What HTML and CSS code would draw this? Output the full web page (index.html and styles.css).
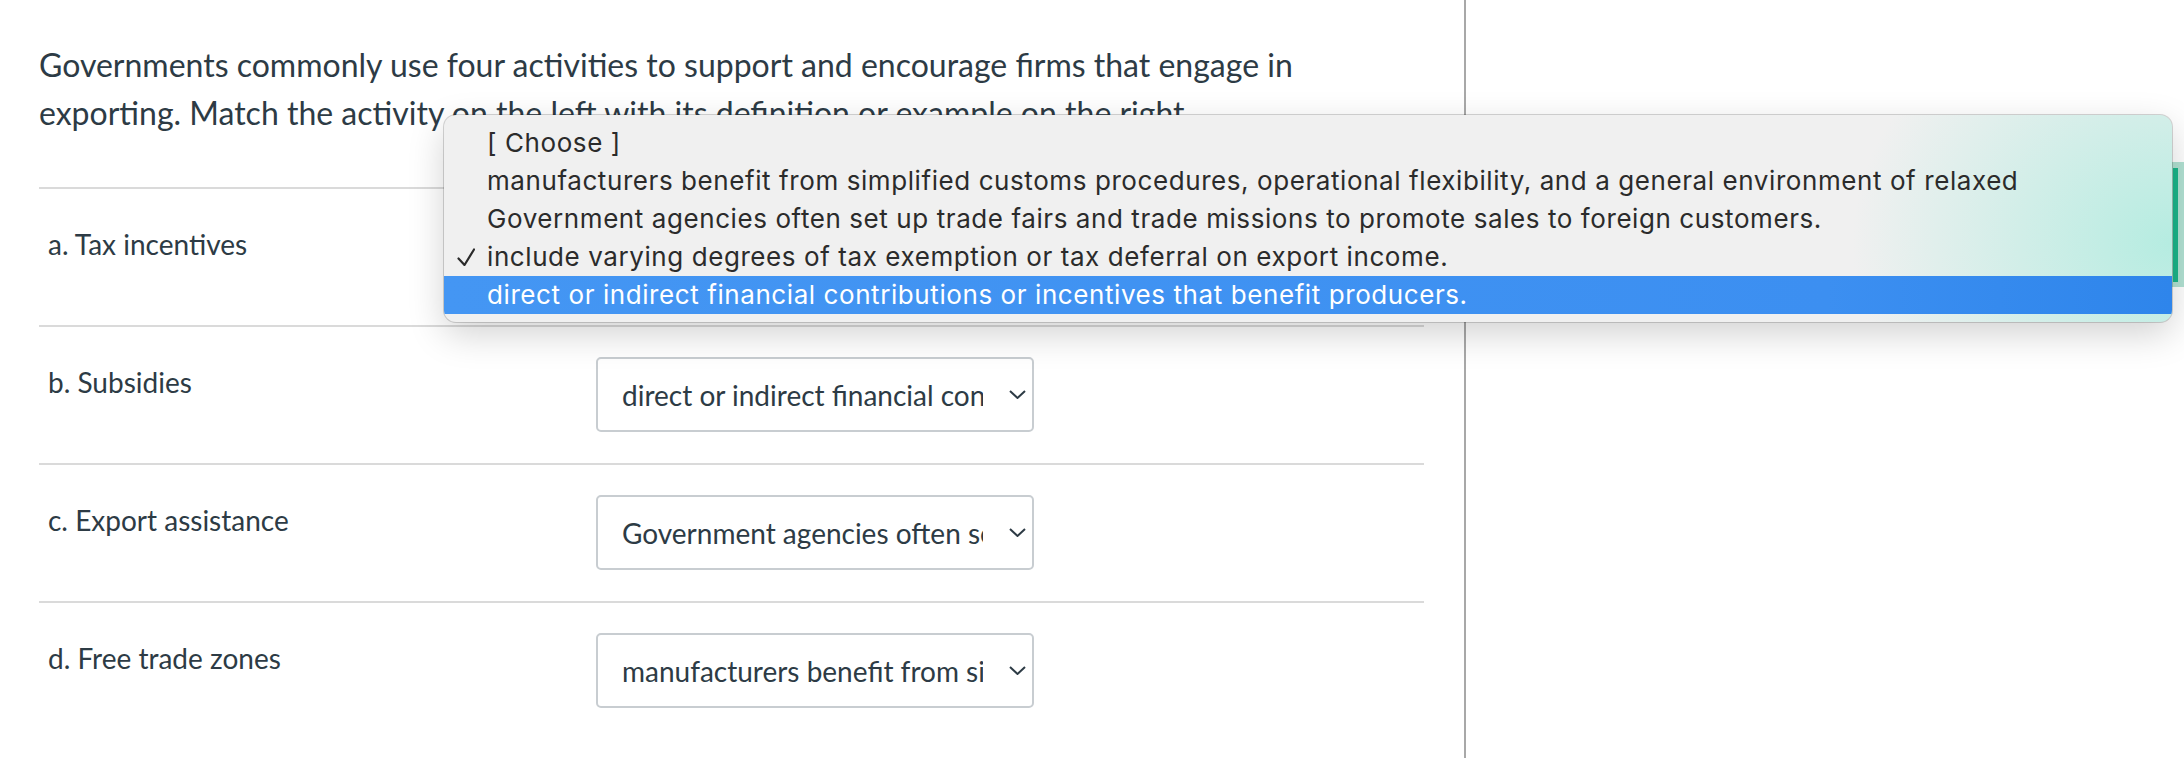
FILE: index.html
```html
<!DOCTYPE html>
<html lang="en">
<head>
<meta charset="utf-8">
<title>Matching question</title>
<link rel="stylesheet" href="styles.css">
</head>
<body>
<div class="page">
  <main class="content">
    <div class="question">
      <p class="prompt">Governments commonly use four activities to support and encourage firms that engage in exporting. Match the activity on the left with its definition or example on the right.</p>
      <div class="answers">
        <div class="row">
          <div class="label">a. Tax incentives</div>
          <div class="select"><span class="value">include varying degrees of tax exemption or tax deferral on export income.</span><svg class="chev" width="17" height="9" viewBox="0 0 17 9"><polyline points="1,1 8.5,8 16,1"/></svg></div>
        </div>
        <div class="row">
          <div class="label">b. Subsidies</div>
          <div class="select"><span class="value">direct or indirect financial contributions or incentives that benefit producers.</span><svg class="chev" width="17" height="9" viewBox="0 0 17 9"><polyline points="1,1 8.5,8 16,1"/></svg></div>
        </div>
        <div class="row">
          <div class="label">c. Export assistance</div>
          <div class="select"><span class="value">Government agencies often set up trade fairs and trade missions to promote sales to foreign customers.</span><svg class="chev" width="17" height="9" viewBox="0 0 17 9"><polyline points="1,1 8.5,8 16,1"/></svg></div>
        </div>
        <div class="row">
          <div class="label">d. Free trade zones</div>
          <div class="select"><span class="value">manufacturers benefit from simplified customs procedures, operational flexibility, and a general environment of relaxed</span><svg class="chev" width="17" height="9" viewBox="0 0 17 9"><polyline points="1,1 8.5,8 16,1"/></svg></div>
        </div>
      </div>
    </div>
  </main>
  <aside class="sidebar"></aside>
</div>

<div class="edge-strip"><div class="edge-inner"></div></div>

<div class="menu">
  <div class="option"><span class="check"></span><span class="text">[ Choose ]</span></div>
  <div class="option"><span class="check"></span><span class="text">manufacturers benefit from simplified customs procedures, operational flexibility, and a general environment of relaxed</span></div>
  <div class="option"><span class="check"></span><span class="text">Government agencies often set up trade fairs and trade missions to promote sales to foreign customers.</span></div>
  <div class="option"><span class="check"><svg width="18" height="18" viewBox="0 0 18 18"><polyline points="1.5,10.5 7.5,17 17,1.5"/></svg></span><span class="text">include varying degrees of tax exemption or tax deferral on export income.</span></div>
  <div class="option active"><span class="check"></span><span class="text">direct or indirect financial contributions or incentives that benefit producers.</span></div>
</div>
</body>
</html>
```
FILE: styles.css
```css
html, body {
  margin: 0;
  padding: 0;
  background: #ffffff;
}

body {
  font-family: Lato, "Open Sans", sans-serif;
  color: #2d3b45;
  width: 2184px;
  height: 758px;
  overflow: hidden;
  position: relative;
}

.page {
  display: flex;
  height: 758px;
}

.content {
  width: 1466px;
  border-right: 2px solid #a8a8a8;
  box-sizing: border-box;
  padding: 0 40px 0 39px;
}

.sidebar {
  flex: 1;
}

.prompt {
  margin: 41px 0 50px 0;
  font-size: 32px;
  line-height: 48px;
  max-width: 1340px;
}

.row {
  border-top: 2px solid #dadada;
  padding: 30px 0 31px 9px;
  display: grid;
  grid-template-columns: 548px 438px;
  align-items: start;
}

.label {
  font-size: 28px;
  line-height: 42px;
  margin-top: 4px;
}

.select {
  box-sizing: border-box;
  height: 75px;
  border: 2px solid #c8cdd1;
  border-radius: 5px;
  background: #fff;
  display: flex;
  align-items: center;
  padding: 0 6px 0 24px;
  gap: 26px;
  font-size: 28px;
}

.value {
  width: 361px;
  flex: none;
  overflow: hidden;
  white-space: nowrap;
}

.chev {
  flex: none;
  fill: none;
  stroke: #2d3b45;
  stroke-width: 2;
}

.edge-strip {
  position: absolute;
  left: 2160px;
  top: 162px;
  width: 24px;
  height: 125px;
  background: #b2e2d3;
}

.edge-inner {
  position: absolute;
  left: 13px;
  top: 6px;
  width: 5px;
  height: 114px;
  background: #1ab68a;
}

.menu {
  position: absolute;
  left: 444px;
  top: 115px;
  width: 1728px;
  height: 207px;
  box-sizing: border-box;
  padding: 9px 0 8px 0;
  border-radius: 12px;
  background:
    radial-gradient(ellipse 320px 260px at 100% 62%, rgba(178, 236, 224, 0.95), rgba(178, 236, 224, 0) 100%),
    #f0f0f0;
  box-shadow: 0 0 0 1px rgba(0, 0, 0, 0.16), 0 12px 36px rgba(0, 0, 0, 0.18);
  font-family: Inter, "Liberation Sans", sans-serif;
  font-size: 26px;
  letter-spacing: 0.58px;
  color: #2b2b2b;
  overflow: hidden;
}

.option {
  height: 38px;
  line-height: 38px;
  display: flex;
  align-items: center;
  white-space: nowrap;
}

.check {
  width: 43px;
  height: 38px;
  flex: none;
  display: flex;
  align-items: center;
  justify-content: flex-end;
  padding-right: 12px;
  box-sizing: border-box;
}

.check svg {
  fill: none;
  stroke: #2b2b2b;
  stroke-width: 2.2;
  stroke-linecap: round;
  stroke-linejoin: round;
}

.option.active {
  background: linear-gradient(90deg, #4496f3, #3c8ff1 80%, #2e85eb);
  color: #ffffff;
}
```
